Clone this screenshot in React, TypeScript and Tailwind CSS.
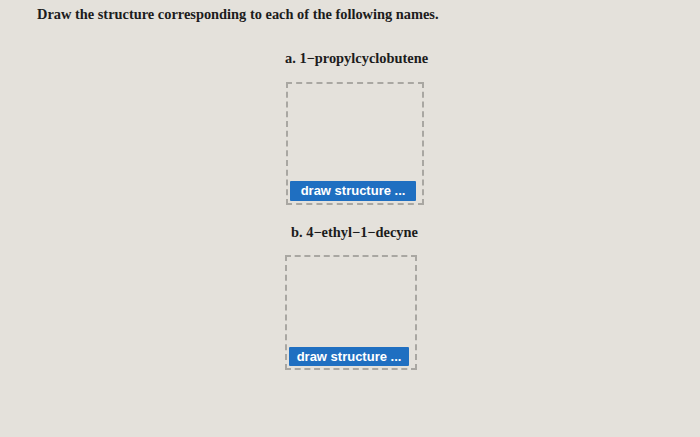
export default function App() {
  return (
    <div
      className="w-[700px] h-[437px] bg-[#e4e1db] text-[#1c1c1c] overflow-hidden"
      style={{ fontFamily: '"Liberation Serif", serif' }}
    >
      <h1 className="pl-[37px] pt-[4px] text-[14.4px] leading-5 font-bold">
        Draw the structure corresponding to each of the following names.
      </h1>

      <div className="pl-[285px] pt-[24px] flex flex-col">
        <p className="text-[14.4px] leading-5 font-bold">a. 1−propylcyclobutene</p>
        <div className="mt-[14px] ml-[1px] w-[138px] h-[123px] border-2 border-dashed border-[#a9a7a2] flex flex-col justify-end p-[1px]">
          <button
            className="w-[126px] h-[20px] bg-[#1f6fc1] text-white text-[13px] font-bold leading-5 rounded-[1px] ml-[1px] mb-[1px]"
            style={{ fontFamily: '"Liberation Sans", sans-serif' }}
          >
            draw structure ...
          </button>
        </div>

        <p className="mt-[17px] ml-[6px] text-[14.4px] leading-5 font-bold">b. 4−ethyl−1−decyne</p>
        <div className="mt-[13px] w-[132px] h-[115px] border-2 border-dashed border-[#a9a7a2] flex flex-col justify-end p-[1px]">
          <button
            className="w-[120px] h-[19px] bg-[#1f6fc1] text-white text-[13px] font-bold leading-[19px] rounded-[1px] ml-[1px] mb-[1px]"
            style={{ fontFamily: '"Liberation Sans", sans-serif' }}
          >
            draw structure ...
          </button>
        </div>
      </div>
    </div>
  );
}
